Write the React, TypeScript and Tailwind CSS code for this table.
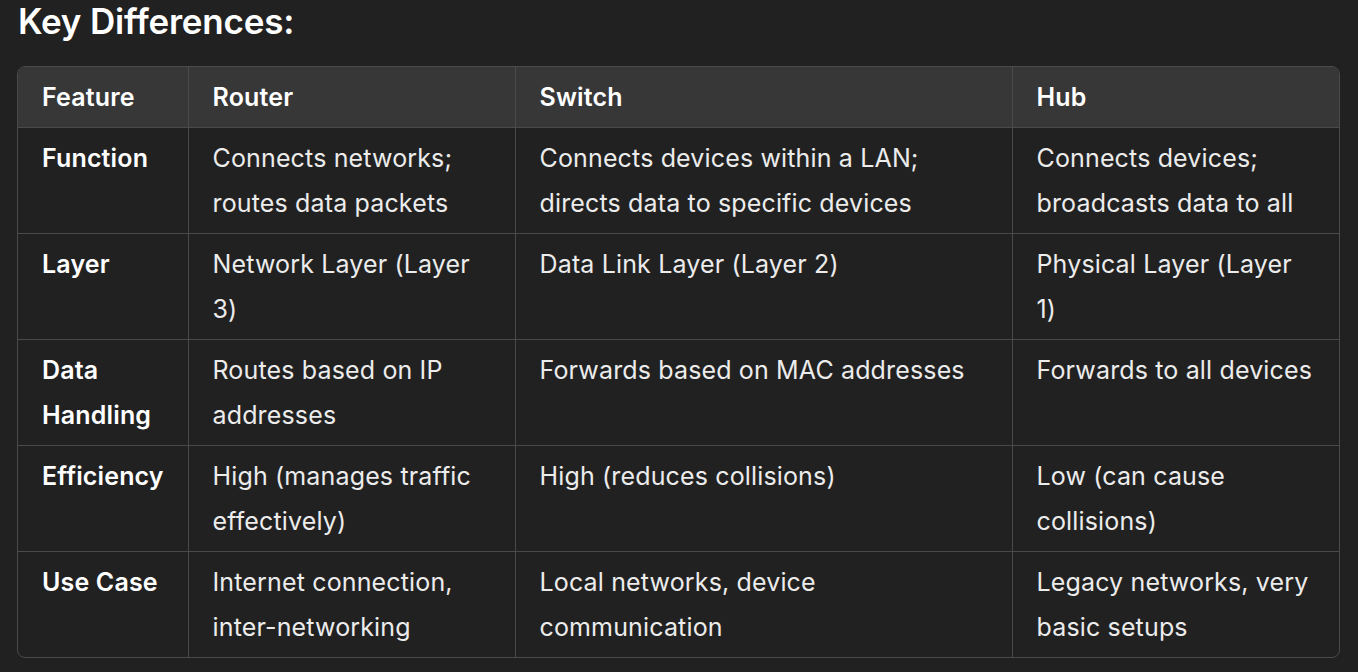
import React from "react";

const headers = ["Feature", "Router", "Switch", "Hub"];

const rows: string[][] = [
  ["Function", "Connects networks; routes data packets", "Connects devices within a LAN; directs data to specific devices", "Connects devices; broadcasts data to all"],
  ["Layer", "Network Layer (Layer 3)", "Data Link Layer (Layer 2)", "Physical Layer (Layer 1)"],
  ["Data Handling", "Routes based on IP addresses", "Forwards based on MAC addresses", "Forwards to all devices"],
  ["Efficiency", "High (manages traffic effectively)", "High (reduces collisions)", "Low (can cause collisions)"],
  ["Use Case", "Internet connection, inter-networking", "Local networks, device communication", "Legacy networks, very basic setups"],
];

const colWidths = ["w-[170px]", "w-[327px]", "w-[497px]", "w-auto"];

export default function App() {
  return (
    <div
      className="w-[1358px] h-[672px] bg-[#212121] text-[#ececec] overflow-hidden"
      style={{ fontFamily: "Inter, 'Noto Sans', sans-serif" }}
    >
      <h3 className="pl-[18px] pt-[1px] h-[66px] text-[35px] leading-[40px] font-semibold text-white tracking-[-0.2px]">
        Key Differences:
      </h3>
      <div className="ml-[17px] w-[1323px] rounded-lg border border-[#4a4a4a] overflow-hidden">
        <table className="w-full table-fixed border-collapse text-[25px] leading-[45px] tracking-[0.15px]">
          <colgroup>
            {colWidths.map((w, i) => (
              <col key={i} className={w} />
            ))}
          </colgroup>
          <thead>
            <tr className="bg-[#373737]">
              {headers.map((h, i) => (
                <th
                  key={h}
                  className={`text-left font-semibold text-white px-6 pt-2 pb-[7px] border-b border-[#4a4a4a] ${
                    i < headers.length - 1 ? "border-r" : ""
                  }`}
                >
                  {h}
                </th>
              ))}
            </tr>
          </thead>
          <tbody>
            {rows.map((row, r) => (
              <tr key={r}>
                {row.map((cell, c) => (
                  <td
                    key={c}
                    className={`align-top px-6 pt-2 pb-[7px] border-[#4a4a4a] ${c === 0 ? "font-semibold text-white" : ""} ${
                      c < row.length - 1 ? "border-r" : ""
                    } ${r < rows.length - 1 ? "border-b" : ""}`}
                  >
                    {cell}
                  </td>
                ))}
              </tr>
            ))}
          </tbody>
        </table>
      </div>
    </div>
  );
}
